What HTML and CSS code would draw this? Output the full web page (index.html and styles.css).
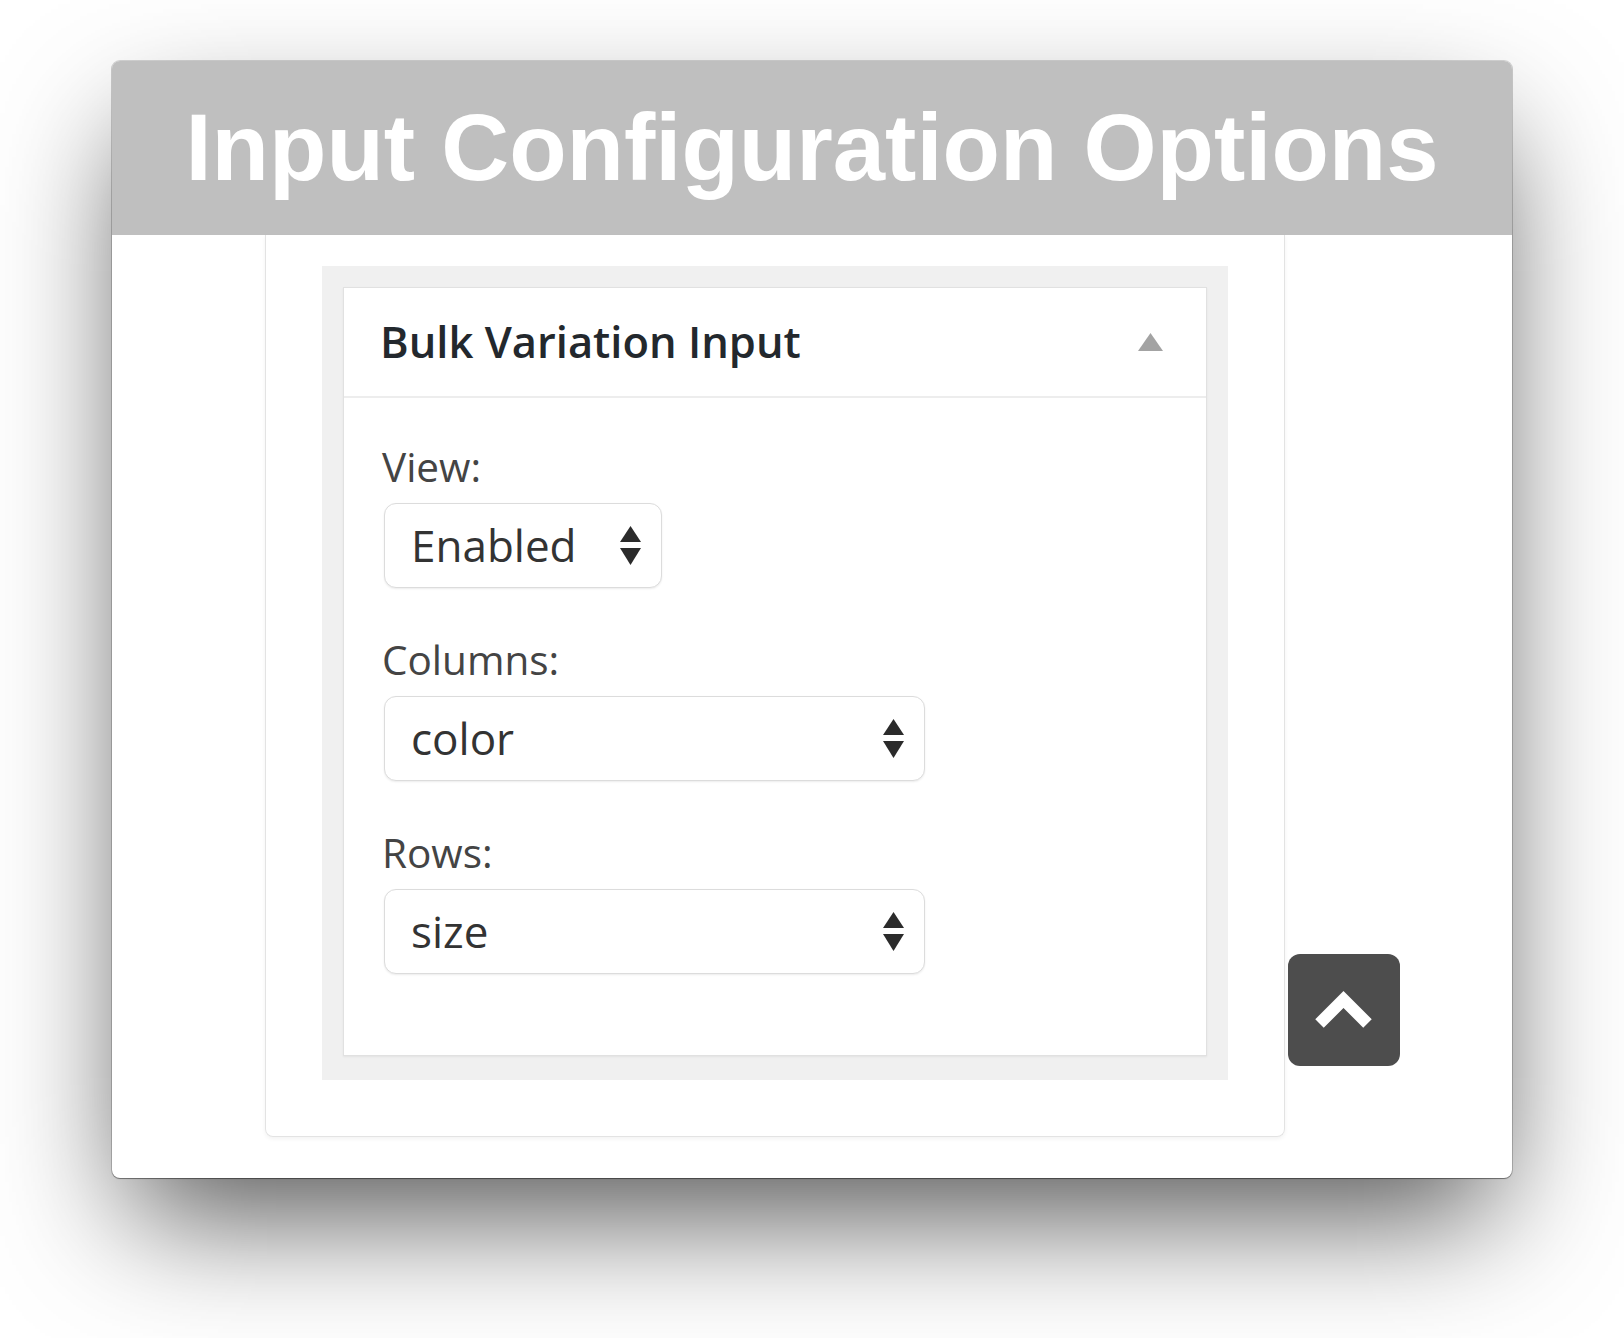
FILE: index.html
```html
<!DOCTYPE html>
<html lang="en">
<head>
<meta charset="utf-8">
<title>Input Configuration Options</title>
<link rel="stylesheet" href="styles.css">
</head>
<body>
<div class="stage">
  <div class="window">
    <header class="titlebar">
      <h1 class="titlebar-text">Input Configuration Options</h1>
    </header>
    <div class="content">
      <div class="card">
        <div class="metabox-holder">
          <div class="postbox">
            <div class="postbox-header">
              <h2 class="postbox-title">Bulk Variation Input</h2>
              <svg class="toggle" width="25" height="18" viewBox="0 0 25 18"><polygon points="12.5,0 25,18 0,18" fill="#a3a3a3"/></svg>
            </div>
            <div class="inside">
              <div class="field">
                <label class="field-label">View:</label>
                <div class="select select-short">
                  <span class="select-value">Enabled</span>
                  <svg class="select-arrows" width="21" height="39" viewBox="0 0 21 39"><polygon points="10.5,0 21,16 0,16" fill="#2b2b2b"/><polygon points="0,22 21,22 10.5,39" fill="#2b2b2b"/></svg>
                </div>
              </div>
              <div class="field">
                <label class="field-label">Columns:</label>
                <div class="select select-long">
                  <span class="select-value">color</span>
                  <svg class="select-arrows" width="21" height="39" viewBox="0 0 21 39"><polygon points="10.5,0 21,16 0,16" fill="#2b2b2b"/><polygon points="0,22 21,22 10.5,39" fill="#2b2b2b"/></svg>
                </div>
              </div>
              <div class="field">
                <label class="field-label">Rows:</label>
                <div class="select select-long">
                  <span class="select-value">size</span>
                  <svg class="select-arrows" width="21" height="39" viewBox="0 0 21 39"><polygon points="10.5,0 21,16 0,16" fill="#2b2b2b"/><polygon points="0,22 21,22 10.5,39" fill="#2b2b2b"/></svg>
                </div>
              </div>
            </div>
          </div>
        </div>
      </div>
    </div>
    <a class="to-top" href="#">
      <svg width="112" height="112" viewBox="0 0 112 112"><polyline points="31.5,69.5 55.5,45.5 79.5,69.5" fill="none" stroke="#ffffff" stroke-width="12" stroke-linejoin="miter" stroke-linecap="butt"/></svg>
    </a>
  </div>
</div>
</body>
</html>
```

FILE: styles.css
```css
* { box-sizing: border-box; }

html, body {
  margin: 0;
  padding: 0;
  background: #ffffff;
}

.stage {
  width: 1624px;
  height: 1338px;
  padding: 61px 0 0 112px;
}

.window {
  position: relative;
  width: 1400px;
  height: 1117px;
  background: #ffffff;
  border-radius: 8px;
  overflow: hidden;
  box-shadow: 0 55px 120px -18px rgba(0, 0, 0, 0.68), 0 0 0 1px rgba(0, 0, 0, 0.16), 0 1px 1px rgba(0, 0, 0, 0.35);
}

.titlebar {
  height: 174px;
  background: #bfbfbf;
}

.titlebar-text {
  margin: 0;
  text-align: center;
  font-family: "Liberation Sans", Arial, sans-serif;
  font-weight: 700;
  font-size: 94px;
  line-height: 174px;
  color: #ffffff;
}

.content {
  display: flex;
  padding-left: 153px;
}

.card {
  width: 1020px;
  padding: 31px 56px 56px;
  border: 1px solid #e3e3e3;
  border-top: none;
  border-radius: 0 0 8px 8px;
  box-shadow: 0 2px 4px rgba(0, 0, 0, 0.05);
}

.metabox-holder {
  background: #f0f0f0;
  padding: 21px 21px 24px;
}

.postbox {
  background: #ffffff;
  border: 1px solid #e1e1e1;
  box-shadow: 0 1px 2px rgba(0, 0, 0, 0.06);
  font-family: "Open Sans", "Noto Sans", sans-serif;
}

.postbox-header {
  display: flex;
  align-items: center;
  justify-content: space-between;
  height: 110px;
  padding: 0 43px 0 36px;
  border-bottom: 2px solid #ededed;
}

.postbox-title {
  margin: 0;
  font-size: 43.5px;
  font-weight: 600;
  color: #23282d;
  line-height: 108px;
}

.toggle {
  display: block;
}

.inside {
  padding: 40px 37px 81px;
}

.field + .field {
  margin-top: 43px;
}

.field-label {
  display: block;
  font-size: 40.5px;
  line-height: 57px;
  color: #444444;
  margin-left: 1px;
}

.select {
  display: flex;
  align-items: center;
  justify-content: space-between;
  height: 85px;
  margin: 8px 0 0 3px;
  padding: 0 20px 0 26px;
  border: 1px solid #dcdcdc;
  border-radius: 12px;
  background: #ffffff;
  box-shadow: 0 1px 2px rgba(0, 0, 0, 0.08);
}

.select-short { width: 278px; }
.select-long { width: 541px; }

.select-value {
  font-size: 44px;
  line-height: 83px;
  color: #333333;
}

.select-arrows {
  display: block;
}

.to-top {
  position: absolute;
  left: 1176px;
  top: 893px;
  width: 112px;
  height: 112px;
  border-radius: 12px;
  background: #4d4d4d;
}

.to-top svg {
  display: block;
}
```
